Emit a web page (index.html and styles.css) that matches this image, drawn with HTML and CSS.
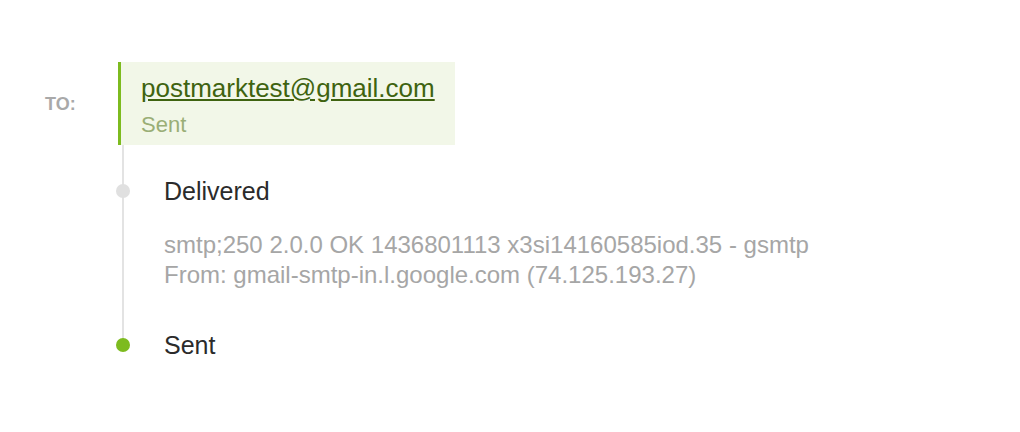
FILE: index.html
```html
<!DOCTYPE html>
<html>
<head>
<meta charset="utf-8">
<link rel="stylesheet" href="styles.css">
</head>
<body>
<div class="recipient">
  <div class="label">TO:</div>
  <div class="track">
    <div class="head">
      <a class="email" href="#">postmarktest@gmail.com</a>
      <div class="status">Sent</div>
    </div>
    <ul class="timeline">
      <li class="event">
        <span class="dot"></span>
        <div class="title">Delivered</div>
        <div class="details">smtp;250 2.0.0 OK 1436801113 x3si14160585iod.35 - gsmtp<br>From: gmail-smtp-in.l.google.com (74.125.193.27)</div>
      </li>
      <li class="event last">
        <span class="dot green"></span>
        <div class="title">Sent</div>
      </li>
    </ul>
  </div>
</div>
</body>
</html>
```

FILE: styles.css
```css
html, body {
  margin: 0;
  padding: 0;
  background: #fff;
}
body {
  font-family: "Liberation Sans", Arial, Helvetica, sans-serif;
  color: #333;
}
.recipient {
  display: flex;
  padding-top: 62px;
}
.label {
  flex: 0 0 118px;
  box-sizing: border-box;
  padding-left: 45px;
  padding-top: 32px;
  font-size: 18px;
  font-weight: bold;
  color: #a9a9a9;
  line-height: 20px;
}
.track {
  display: flex;
  flex-direction: column;
}
.head {
  width: 337px;
  box-sizing: border-box;
  background: #f2f7e8;
  border-left: 3px solid #7dbb1f;
  padding: 11px 0 7px 20px;
}
.email {
  display: block;
  font-size: 26px;
  line-height: 30px;
  color: #3f6310;
  text-decoration: underline;
}
.status {
  font-size: 22px;
  line-height: 26px;
  margin-top: 9px;
  color: #9aae76;
}
.timeline {
  list-style: none;
  margin: 0;
  padding: 0;
}
.event {
  position: relative;
  padding-left: 46px;
  padding-top: 31px;
}
.event::before {
  content: "";
  position: absolute;
  left: 4px;
  top: 0;
  bottom: 0;
  width: 2px;
  background: #e3e3e3;
}
.event.last {
  padding-top: 40px;
}
.event.last::before {
  bottom: auto;
  height: 55px;
}
.dot {
  position: absolute;
  left: -2px;
  top: 39px;
  width: 14px;
  height: 14px;
  border-radius: 50%;
  background: #e0e0e0;
  z-index: 1;
}
.event.last .dot {
  top: 48px;
}
.dot.green {
  background: #7dbb1f;
}
.title {
  font-size: 25px;
  line-height: 30px;
  color: #2b2b2b;
}
.details {
  margin-top: 24px;
  font-size: 24px;
  line-height: 30px;
  color: #a6a6a6;
}
```
